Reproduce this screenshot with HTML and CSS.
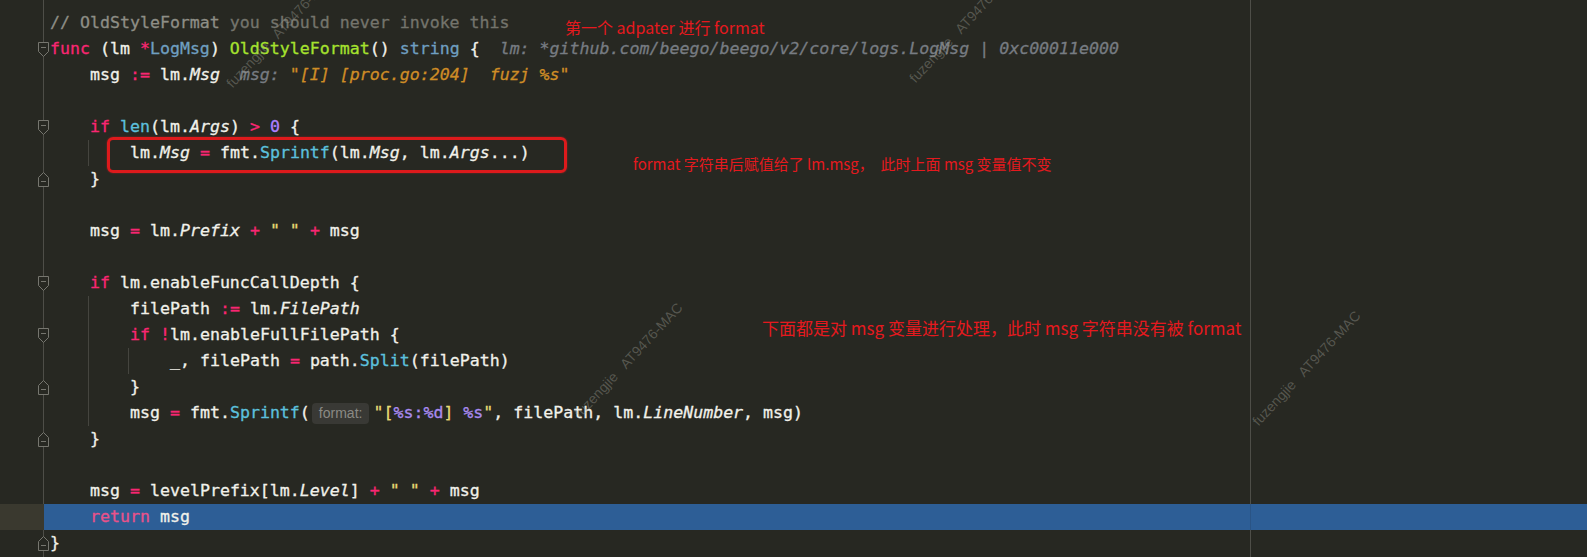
FILE: index.html
```html
<!DOCTYPE html>
<html lang="zh-CN">
<head>
    <meta charset="UTF-8">
    <meta name="viewport" content="width=device-width, initial-scale=1.0">
    <title>OldStyleFormat</title>
    <link rel="stylesheet" href="styles.css">
</head>
<body>
    <div class="editor">
        <div class="line"><span class="gutter"></span><span class="src"><span class="cm">// OldStyleFormat</span><span class="cm2"> you should never invoke this</span></span></div>
        <div class="line"><span class="gutter"><svg class="fold" viewBox="0 0 11 15"><path d="M.5 .5h10v9l-5 5-5-5z"/><path d="M3 5.5h5"/></svg></span><span class="src"><span class="kw">func</span> (lm <span class="op">*</span><span class="ty">LogMsg</span>) <span class="fn">OldStyleFormat</span>() <span class="ty">string</span> {  <span class="hint">lm: *github.com/beego/beego/v2/core/logs.LogMsg | 0xc00011e000</span></span></div>
        <div class="line"><span class="gutter"></span><span class="src"><i class="in"></i>msg <span class="op">:=</span> lm.<em>Msg</em>  <span class="hint">msg: <span class="hs">"[I] [proc.go:204]  fuzj %s"</span></span></span></div>
        <div class="line"><span class="gutter"></span><span class="src"></span></div>
        <div class="line"><span class="gutter"><svg class="fold" viewBox="0 0 11 15"><path d="M.5 .5h10v9l-5 5-5-5z"/><path d="M3 5.5h5"/></svg></span><span class="src"><i class="in"></i><span class="kw">if</span> <span class="bi">len</span>(lm.<em>Args</em>) <span class="op">&gt;</span> <span class="num">0</span> {</span></div>
        <div class="line"><span class="gutter"></span><span class="src"><i class="in g"></i><i class="in"></i>lm.<em>Msg</em> <span class="op">=</span> fmt.<span class="bi">Sprintf</span>(lm.<em>Msg</em>, lm.<em>Args</em>...)</span><span class="redbox"></span></div>
        <div class="line"><span class="gutter"><svg class="fold" viewBox="0 0 11 15"><path d="M.5 14.5h10v-9l-5-5-5 5z"/><path d="M3 9.5h5"/></svg></span><span class="src"><i class="in"></i>}</span></div>
        <div class="line"><span class="gutter"></span><span class="src"></span></div>
        <div class="line"><span class="gutter"></span><span class="src"><i class="in"></i>msg <span class="op">=</span> lm.<em>Prefix</em> <span class="op">+</span> <span class="str">" "</span> <span class="op">+</span> msg</span></div>
        <div class="line"><span class="gutter"></span><span class="src"></span></div>
        <div class="line"><span class="gutter"><svg class="fold" viewBox="0 0 11 15"><path d="M.5 .5h10v9l-5 5-5-5z"/><path d="M3 5.5h5"/></svg></span><span class="src"><i class="in"></i><span class="kw">if</span> lm.enableFuncCallDepth {</span></div>
        <div class="line"><span class="gutter"></span><span class="src"><i class="in g"></i><i class="in"></i>filePath <span class="op">:=</span> lm.<em>FilePath</em></span></div>
        <div class="line"><span class="gutter"><svg class="fold" viewBox="0 0 11 15"><path d="M.5 .5h10v9l-5 5-5-5z"/><path d="M3 5.5h5"/></svg></span><span class="src"><i class="in g"></i><i class="in"></i><span class="kw">if</span> <span class="op">!</span>lm.enableFullFilePath {</span></div>
        <div class="line"><span class="gutter"></span><span class="src"><i class="in g"></i><i class="in g"></i><i class="in"></i>_, filePath <span class="op">=</span> path.<span class="bi">Split</span>(filePath)</span></div>
        <div class="line"><span class="gutter"><svg class="fold" viewBox="0 0 11 15"><path d="M.5 14.5h10v-9l-5-5-5 5z"/><path d="M3 9.5h5"/></svg></span><span class="src"><i class="in g"></i><i class="in"></i>}</span></div>
        <div class="line"><span class="gutter"></span><span class="src"><i class="in g"></i><i class="in"></i>msg <span class="op">=</span> fmt.<span class="bi">Sprintf</span>(<span class="param">format:</span><span class="str">"[</span><span class="fs">%s:%d</span><span class="str">] </span><span class="fs">%s</span><span class="str">"</span>, filePath, lm.<em>LineNumber</em>, msg)</span></div>
        <div class="line"><span class="gutter"><svg class="fold" viewBox="0 0 11 15"><path d="M.5 14.5h10v-9l-5-5-5 5z"/><path d="M3 9.5h5"/></svg></span><span class="src"><i class="in"></i>}</span></div>
        <div class="line"><span class="gutter"></span><span class="src"></span></div>
        <div class="line"><span class="gutter"></span><span class="src"><i class="in"></i>msg <span class="op">=</span> levelPrefix[lm.<em>Level</em>] <span class="op">+</span> <span class="str">" "</span> <span class="op">+</span> msg</span></div>
        <div class="line current"><span class="gutter"></span><span class="src"><i class="in"></i><span class="kw2">return</span> msg</span></div>
        <div class="line"><span class="gutter"><svg class="fold" viewBox="0 0 11 15"><path d="M.5 14.5h10v-9l-5-5-5 5z"/><path d="M3 9.5h5"/></svg></span><span class="src">}</span></div>

        <div class="note note1">第一个 adpater 进行 format</div>
        <div class="note note2">format 字符串后赋值给了 lm.msg，  此时上面 msg 变量值不变</div>
        <div class="note note3">下面都是对 msg 变量进行处理，此时 msg 字符串没有被 format</div>

        <div class="wm wm1">fuzengjie   AT9476-MAC</div>
        <div class="wm wm2">fuzengjie   AT9476-MAC</div>
        <div class="wm wm3">fuzengjie   AT9476-MAC</div>
        <div class="wm wm4">fuzengjie   AT9476-MAC</div>
        <div class="wm wm5">fuzengjie   AT9476-MAC</div>
    </div>
</body>
</html>
```

FILE: styles.css
```css
body {
    margin: 0;
    padding: 0;
    background-color: #272822;
    overflow: hidden;
}
.editor {
    position: relative;
    height: 557px;
    padding-top: 10px;
    box-sizing: border-box;
    overflow: hidden;
    background:
        linear-gradient(to right, transparent 43px, #4e4e48 43px, #4e4e48 44px, transparent 44px),
        linear-gradient(to right, transparent 1250px, #4e4e48 1250px, #4e4e48 1251px, transparent 1251px),
        #272822;
    font-family: "DejaVu Sans Mono", "Liberation Mono", monospace;
    font-size: 16.6px;
    color: #f1f1ea;
}
.line {
    position: relative;
    display: flex;
    height: 26px;
    line-height: 26px;
}
.line.current {
    background:
        linear-gradient(to right, transparent 1250px, #2a5485 1250px, #2a5485 1251px, transparent 1251px),
        #2d5e96;
}
.gutter {
    flex: 0 0 50px;
    display: flex;
    align-items: center;
}
.line.current .gutter {
    background: linear-gradient(to right, #3a392f 44px, transparent 44px);
}
.fold {
    width: 11px;
    height: 15px;
    margin-left: 38px;
    fill: #272822;
    stroke: #76766f;
    stroke-width: 1;
}
.src {
    white-space: pre;
    -webkit-text-stroke: 0.3px currentColor;
}
.in {
    display: inline-block;
    width: 40px;
    height: 26px;
    vertical-align: top;
}
.in.g {
    background: linear-gradient(to right, transparent 38px, #45453f 38px, #45453f 39px, transparent 39px);
}
em {
    font-style: italic;
}
.cm { color: #8e8e86; }
.cm2 { color: #74746c; }
.kw { color: #f92672; }
.kw2 { color: #e8528a; }
.op { color: #f92672; }
.ty { color: #6f9fc0; }
.fn { color: #a6e22e; }
.bi { color: #5cc0dd; }
.num { color: #ae81ff; }
.str { color: #e6db74; }
.fs { color: #a98bf0; }
.hint {
    color: #777c82;
    font-style: italic;
}
.hs { color: #cf8d26; }
.param {
    display: inline-block;
    vertical-align: top;
    margin: 3px 4px 0 2px;
    padding: 0 7px;
    height: 21px;
    line-height: 21px;
    border-radius: 4px;
    background: #393935;
    color: #8a8a84;
    font-family: "Liberation Sans", Arial, sans-serif;
    font-size: 14px;
    -webkit-text-stroke: 0;
}
.redbox {
    position: absolute;
    left: 107px;
    top: -3px;
    width: 460px;
    height: 36px;
    box-sizing: border-box;
    border: 3px solid #dd1a1c;
    border-radius: 6px;
    box-shadow: 0 0 2px rgba(255, 40, 40, 0.5);
}
.note {
    position: absolute;
    white-space: pre;
    line-height: 1;
    color: #e5191e;
    font-family: "Noto Sans CJK SC", "Noto Sans", sans-serif;
}
.note1 {
    left: 565px;
    top: 19px;
    font-size: 16px;
}
.note2 {
    left: 633px;
    top: 156px;
    font-size: 15px;
}
.note3 {
    left: 762px;
    top: 319px;
    font-size: 17px;
}
.wm {
    position: absolute;
    white-space: pre;
    line-height: 1;
    font-family: "Liberation Sans", Arial, sans-serif;
    font-size: 14px;
    color: rgba(165, 165, 155, 0.38);
    transform: rotate(-47deg);
    transform-origin: 0 100%;
}
.wm1 { left: 234px; top: 76px; }
.wm2 { left: 917px; top: 71px; }
.wm3 { left: 582px; top: 406px; }
.wm4 { left: 1260px; top: 414px; }
.wm5 { left: -104px; top: 362px; }
```
